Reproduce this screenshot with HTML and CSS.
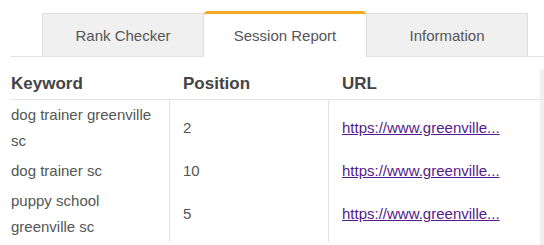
FILE: index.html
```html
<!DOCTYPE html>
<html lang="en">
<head>
<meta charset="utf-8">
<title>Session Report</title>
<link rel="stylesheet" href="styles.css">
</head>
<body>
<div class="tabs">
  <div class="tab">Rank Checker</div>
  <div class="tab active">Session Report</div>
  <div class="tab">Information</div>
</div>
<div class="panel">
  <table class="report">
    <colgroup>
      <col class="c-kw">
      <col class="c-pos">
      <col class="c-url">
    </colgroup>
    <thead>
      <tr><th>Keyword</th><th class="sep">Position</th><th class="sep">URL</th></tr>
    </thead>
    <tbody>
      <tr>
        <td>dog trainer greenville sc</td>
        <td class="sep">2</td>
        <td class="sep"><a href="#" class="link">https://www.greenville...</a></td>
      </tr>
      <tr>
        <td>dog trainer sc</td>
        <td class="sep">10</td>
        <td class="sep"><a href="#" class="link">https://www.greenville...</a></td>
      </tr>
      <tr>
        <td>puppy school greenville sc</td>
        <td class="sep">5</td>
        <td class="sep"><a href="#" class="link">https://www.greenville...</a></td>
      </tr>
    </tbody>
  </table>
  <div class="scroll"></div>
</div>
</body>
</html>
```
FILE: styles.css
```css
html, body {
  margin: 0;
  padding: 0;
  background: #ffffff;
  font-family: "Liberation Sans", Arial, sans-serif;
  color: #555555;
}

.tabs {
  display: flex;
  align-items: flex-end;
  height: 56px;
  margin-left: 11px;
  padding-left: 31px;
  border-bottom: 1px solid #e2e2e2;
}

.tab {
  box-sizing: border-box;
  width: 162px;
  height: 43px;
  display: flex;
  align-items: center;
  justify-content: center;
  background: #f0f0f0;
  border: 1px solid #dedede;
  border-bottom: none;
  font-size: 15px;
  color: #555555;
}

.tab.active {
  height: 46px;
  margin-bottom: -1px;
  background: #ffffff;
  border: none;
  border-top: 3px solid #f5a623;
  border-radius: 4px 4px 0 0;
}

.panel {
  display: flex;
  margin-top: 12px;
  margin-left: 11px;
  min-height: 176px;
}

.report {
  width: 529px;
  table-layout: fixed;
  border-collapse: separate;
  border-spacing: 0;
  align-self: flex-start;
}

.c-kw { width: 158px; }
.c-pos { width: 159px; }
.c-url { width: 212px; }

.report th {
  text-align: left;
  font-size: 17px;
  font-weight: bold;
  color: #444444;
  line-height: 30px;
  padding: 0 10px 0 0;
  border-bottom: 1px solid #e2e2e2;
}

.report th.sep {
  padding-left: 14px;
}

.report td {
  font-size: 15px;
  line-height: 26px;
  padding: 2px 10px 2px 0;
  vertical-align: middle;
  color: #555555;
}

.report td.sep {
  padding-left: 13px;
  border-left: 1px solid #e2e2e2;
}

.link {
  color: #551a8b;
  text-decoration: underline;
  white-space: nowrap;
}

.scroll {
  width: 4px;
  background: #f0f0f0;
}
```
